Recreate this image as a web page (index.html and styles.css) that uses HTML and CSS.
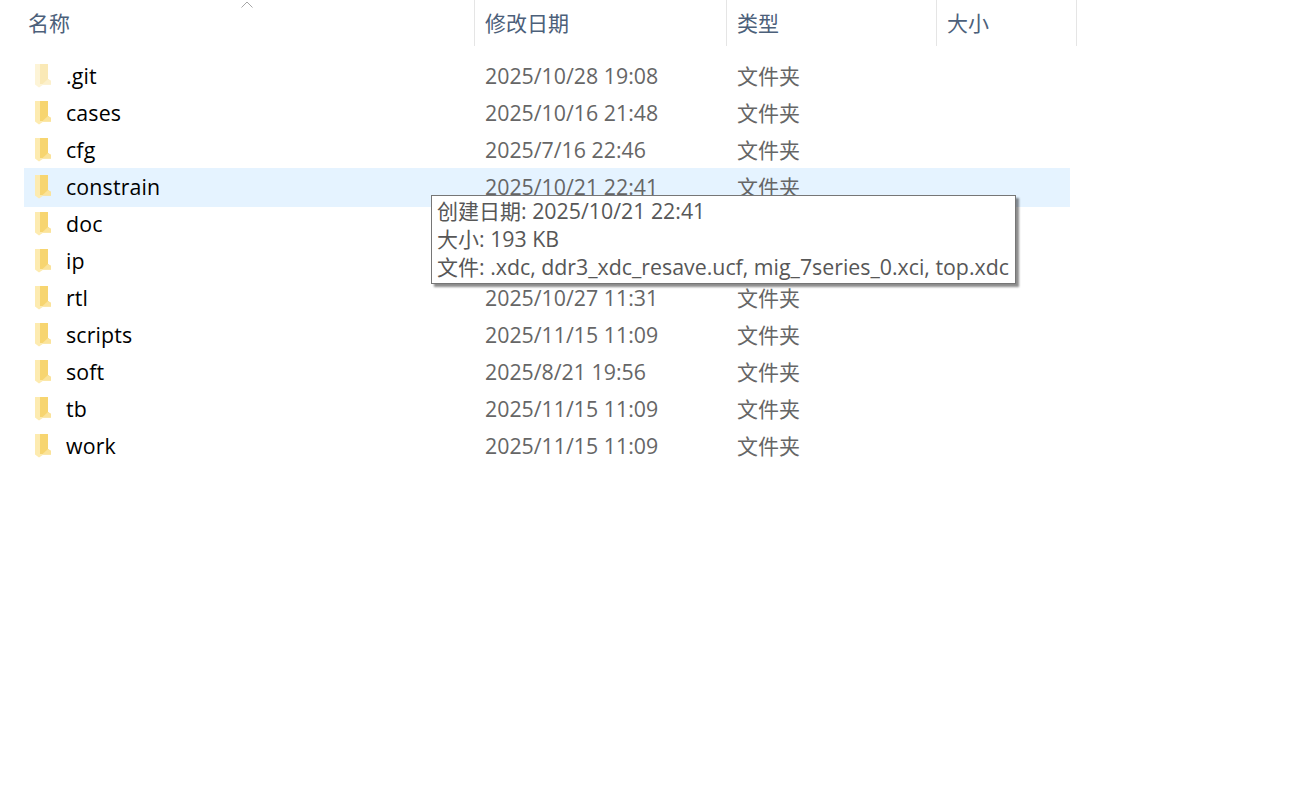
FILE: index.html
```html
<!DOCTYPE html>
<html lang="zh">
<head>
    <meta charset="UTF-8">
    <title>文件列表</title>
    <link rel="stylesheet" href="styles.css">
</head>
<body>

<svg class="defs" width="0" height="0">
    <symbol id="folder" viewBox="0 0 18 24">
        <path d="M6 0h8v15l3 2v3.500H6z" fill="#f7d570"/>
        <path d="M14 15l3 2v3.500H8z" fill="#fbe39a"/>
        <path d="M1 0h5v20.500h3.500L5 23.500 1 20.500z" fill="#fdebb0"/>
    </symbol>
</svg>

<div class="list">
    <div class="header">
        <div class="sort-arrow">
            <svg width="14" height="7" viewBox="0 0 14 7"><path d="M1.500 6.500L7 1l5.500 5.500" fill="none" stroke="#a6a6a6" stroke-width="1"/></svg>
        </div>
        <div class="col col-name">名称</div>
        <div class="col col-date">修改日期</div>
        <div class="col col-type">类型</div>
        <div class="col col-size">大小</div>
    </div>

    <div class="rows">
        <div class="row hidden-item">
            <div class="col-name"><svg class="icon"><use href="#folder"/></svg>.git</div>
            <div class="col-date">2025/10/28 19:08</div>
            <div class="col-type">文件夹</div>
        </div>
        <div class="row">
            <div class="col-name"><svg class="icon"><use href="#folder"/></svg>cases</div>
            <div class="col-date">2025/10/16 21:48</div>
            <div class="col-type">文件夹</div>
        </div>
        <div class="row">
            <div class="col-name"><svg class="icon"><use href="#folder"/></svg>cfg</div>
            <div class="col-date">2025/7/16 22:46</div>
            <div class="col-type">文件夹</div>
        </div>
        <div class="row hover">
            <div class="col-name"><svg class="icon"><use href="#folder"/></svg>constrain</div>
            <div class="col-date">2025/10/21 22:41</div>
            <div class="col-type">文件夹</div>
        </div>
        <div class="row">
            <div class="col-name"><svg class="icon"><use href="#folder"/></svg>doc</div>
        </div>
        <div class="row">
            <div class="col-name"><svg class="icon"><use href="#folder"/></svg>ip</div>
        </div>
        <div class="row">
            <div class="col-name"><svg class="icon"><use href="#folder"/></svg>rtl</div>
            <div class="col-date">2025/10/27 11:31</div>
            <div class="col-type">文件夹</div>
        </div>
        <div class="row">
            <div class="col-name"><svg class="icon"><use href="#folder"/></svg>scripts</div>
            <div class="col-date">2025/11/15 11:09</div>
            <div class="col-type">文件夹</div>
        </div>
        <div class="row">
            <div class="col-name"><svg class="icon"><use href="#folder"/></svg>soft</div>
            <div class="col-date">2025/8/21 19:56</div>
            <div class="col-type">文件夹</div>
        </div>
        <div class="row">
            <div class="col-name"><svg class="icon"><use href="#folder"/></svg>tb</div>
            <div class="col-date">2025/11/15 11:09</div>
            <div class="col-type">文件夹</div>
        </div>
        <div class="row">
            <div class="col-name"><svg class="icon"><use href="#folder"/></svg>work</div>
            <div class="col-date">2025/11/15 11:09</div>
            <div class="col-type">文件夹</div>
        </div>
    </div>
</div>

<!-- tooltip of the hovered folder -->
<div class="tooltip">
    <div><span class="cjk">创建日期</span>: 2025/10/21 22:41</div>
    <div><span class="cjk">大小</span>: 193 KB</div>
    <div><span class="cjk">文件</span>: .xdc, ddr3_xdc_resave.ucf, mig_7series_0.xci, top.xdc</div>
</div>

</body>
</html>
```

FILE: styles.css
```css
body {
    margin: 0;
    height: 812px;
    overflow: hidden;
    background-color: #fff;
    font-family: "Open Sans", "Noto Sans CJK SC", sans-serif;
    font-size: 21.33px;
    position: relative;
}
.defs {
    position: absolute;
}
.cjk {
    font-size: 21px;
}
.list {
    display: flex;
    flex-direction: column;
}
.header {
    display: flex;
    height: 46px;
    line-height: 46px;
    font-size: 21px;
    color: #4c607a;
    position: relative;
}
.header .col {
    box-sizing: border-box;
    border-right: 1px solid #e5e5e5;
}
.sort-arrow {
    position: absolute;
    left: 240px;
    top: 0;
    line-height: 0;
}
.col-name {
    width: 475px;
    flex: none;
    box-sizing: border-box;
}
.header .col-name {
    padding-left: 28px;
}
.col-date {
    width: 252px;
    flex: none;
    box-sizing: border-box;
    padding-left: 10px;
}
.col-type {
    width: 210px;
    flex: none;
    box-sizing: border-box;
    padding-left: 10px;
    font-size: 21px;
}
.row .col-type {
    padding-top: 1px;
}
.col-size {
    width: 140px;
    flex: none;
    box-sizing: border-box;
    padding-left: 10px;
}
.rows {
    margin-top: 11px;
}
.row {
    display: flex;
    box-sizing: border-box;
    width: 1046px;
    height: 39px;
    padding-bottom: 2px;
    line-height: 37px;
    margin-left: 24px;
    margin-bottom: -2px;
    color: #666;
}
.row .col-name {
    width: 451px;
    display: flex;
    align-items: center;
    color: #000;
    letter-spacing: 0.15px;
}
.row.hover {
    background-color: #e5f3ff;
}
.icon {
    width: 18px;
    height: 24px;
    margin: 1px 14px 0 10px;
    flex: none;
}
.hidden-item .icon {
    opacity: 0.5;
}
.tooltip {
    position: absolute;
    left: 431px;
    top: 195px;
    width: 585px;
    height: 89px;
    box-sizing: border-box;
    padding: 1px 5px;
    background-color: #fff;
    border: 1px solid #767676;
    box-shadow: 3px 3px 2px rgba(0, 0, 0, 0.45);
    color: #575757;
    line-height: 28px;
    white-space: nowrap;
}
```
